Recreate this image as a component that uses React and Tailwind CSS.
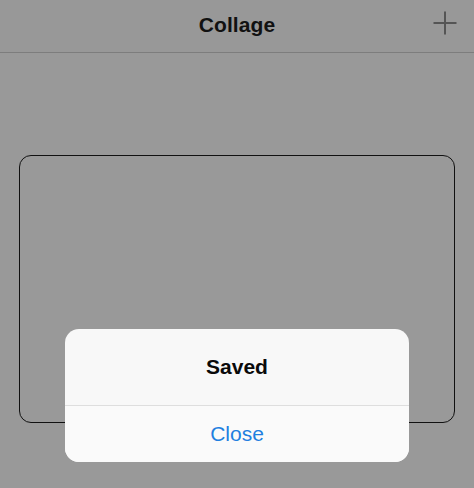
import React from "react";

const font = { fontFamily: '"Liberation Sans", Arial, sans-serif' };

const PlusIcon = () => (
  <svg width="24" height="24" viewBox="0 0 24 24" className="block">
    <path d="M12 0.5V23.5M0.5 12H23.5" stroke="#555555" strokeWidth="2" fill="none" />
  </svg>
);

const App = () => {
  return (
    <div className="relative h-[488px] w-[474px] overflow-hidden bg-[#999999]" style={font}>
      <div className="grid h-[53px] grid-cols-[1fr_auto_1fr] items-center border-b border-[#7d7d7d] bg-[#989898]">
        <div />
        <h1 className="pb-[2px] text-[21px] font-bold tracking-[0.1px] text-[#111111]">Collage</h1>
        <div className="flex justify-end pr-[17px] pb-[6px]">
          <PlusIcon />
        </div>
      </div>

      <div className="px-[19px] pt-[102px]">
        <div className="h-[268px] rounded-[12px] border-[1.5px] border-[#111111]" />
      </div>

      <div className="absolute left-[65px] top-[329px] w-[344px] overflow-hidden rounded-[14px] bg-[#f8f8f8]">
        <div className="flex h-[77px] items-center justify-center border-b border-[#dedede] pb-[1px]">
          <p className="text-[21px] font-bold text-[#0a0a0a]">Saved</p>
        </div>
        <div className="flex h-[56px] items-center justify-center bg-[#fafafa]">
          <button type="button" className="text-[21px] text-[#1f7fe0]">
            Close
          </button>
        </div>
      </div>
    </div>
  );
};

export default App;
